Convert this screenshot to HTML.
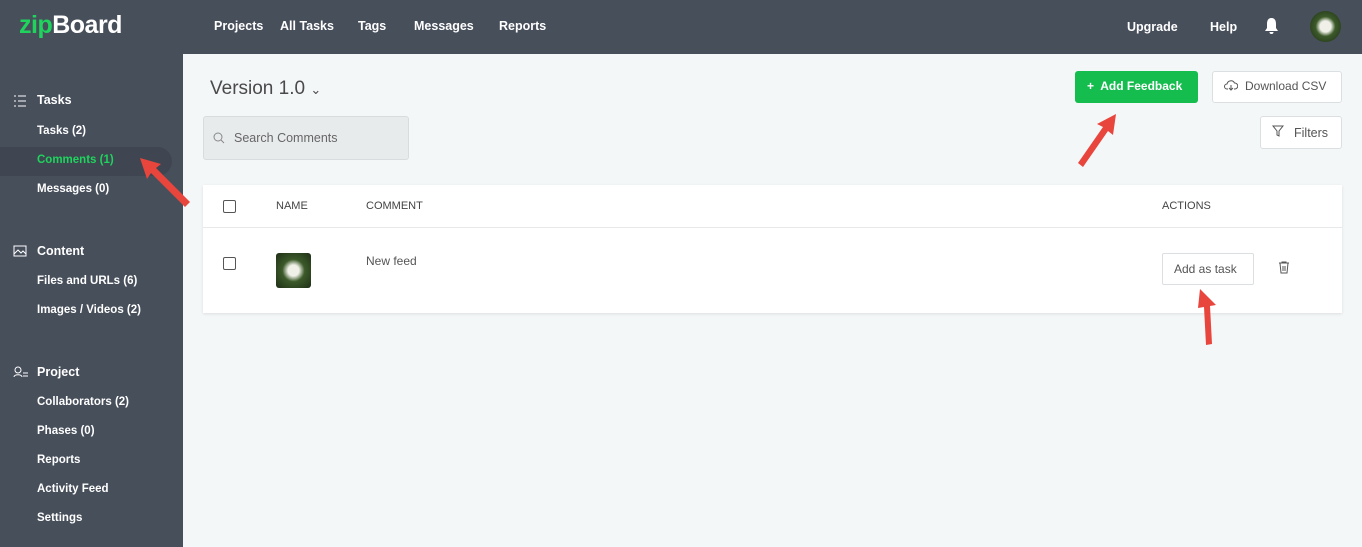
<!DOCTYPE html>
<html><head><style>
*{margin:0;padding:0;box-sizing:border-box}
body{width:1362px;height:547px;overflow:hidden;background:#f4f7f8;font-family:"Liberation Sans",sans-serif;position:relative}
.hdr{position:absolute;left:0;top:0;width:1362px;height:54px;background:#474f5b}
.side{position:absolute;left:0;top:54px;width:183px;height:493px;background:#474f5b}
.t{position:absolute;color:#fff;font-weight:bold;font-size:12.5px;white-space:nowrap}
.s{font-size:11.5px}
.box{position:absolute;background:#fff;border:1px solid #dcdfe2;border-radius:3px}
.g{color:#555;font-size:12.5px;position:absolute;white-space:nowrap}
</style></head><body>
<div class="hdr"></div>
<div class="side"></div>
<div class="t" style="left:19px;top:11px;font-size:25px;letter-spacing:-0.5px"><span style="color:#1fd35d">zip</span>Board</div>
<div class="t" style="left:214px;top:19px">Projects</div>
<div class="t" style="left:280px;top:19px">All Tasks</div>
<div class="t" style="left:358px;top:19px">Tags</div>
<div class="t" style="left:414px;top:19px">Messages</div>
<div class="t" style="left:499px;top:19px">Reports</div>
<div class="t" style="left:1127px;top:20px">Upgrade</div>
<div class="t" style="left:1210px;top:20px">Help</div>
<svg style="position:absolute;left:1263px;top:17px" width="17" height="18"><path d="M8.5 1C5 1 4 4 4 7v4l-2 3h13l-2-3V7c0-3-1-6-4.5-6zM6.5 15a2 2 0 004 0z" fill="#fff"/></svg>
<div style="position:absolute;left:1310px;top:11px;width:31px;height:31px;border-radius:50%;background:radial-gradient(circle,#f0f0e8 0 25%,#3c5a2a 45%,#1e2e16)"></div>

<svg style="position:absolute;left:13px;top:94px" width="14" height="14" stroke="#fff" fill="none"><path d="M1 2h2M1 7h2M1 12h2M5 2h8M5 7h8M5 12h8"/></svg>
<div class="t" style="left:37px;top:93px">Tasks</div>
<div class="t s" style="left:37px;top:125px">Tasks (2)</div>
<div style="position:absolute;left:0;top:147px;width:172px;height:29px;background:#3f4651;border-radius:0 15px 15px 0"></div>
<div class="t s" style="left:37px;top:154px;color:#1fd35d">Comments (1)</div>
<div class="t s" style="left:37px;top:183px">Messages (0)</div>
<svg style="position:absolute;left:13px;top:245px" width="14" height="12" stroke="#fff" fill="none"><rect x="1" y="1" width="12" height="10"/><path d="M1 9l4-4 3 3 2-2 3 3"/></svg>
<div class="t" style="left:37px;top:244px">Content</div>
<div class="t s" style="left:37px;top:275px">Files and URLs (6)</div>
<div class="t s" style="left:37px;top:304px">Images / Videos (2)</div>
<svg style="position:absolute;left:13px;top:366px" width="16" height="12" stroke="#fff" fill="none"><circle cx="5" cy="4" r="3"/><path d="M1 11c0-3 8-3 8 0M10 7h5M10 10h5"/></svg>
<div class="t" style="left:37px;top:365px">Project</div>
<div class="t s" style="left:37px;top:396px">Collaborators (2)</div>
<div class="t s" style="left:37px;top:425px">Phases (0)</div>
<div class="t s" style="left:37px;top:454px">Reports</div>
<div class="t s" style="left:37px;top:483px">Activity Feed</div>
<div class="t s" style="left:37px;top:512px">Settings</div>

<div class="g" style="left:210px;top:78px;font-size:19px;color:#4a4a4a">Version 1.0 <span style="font-size:13px">&#8964;</span></div>
<div style="position:absolute;left:203px;top:116px;width:206px;height:44px;background:#e8ebec;border:1px solid #d8dcdf;border-radius:3px"></div>
<svg style="position:absolute;left:213px;top:132px" width="12" height="12" stroke="#888" fill="none"><circle cx="5" cy="5" r="4"/><path d="M8 8l3 3"/></svg>
<div class="g" style="left:234px;top:131px;color:#666">Search Comments</div>

<div style="position:absolute;left:1075px;top:71px;width:123px;height:32px;background:#15bd4f;border-radius:3px"></div>
<div class="t" style="left:1087px;top:79px;font-size:12px">+&nbsp; Add Feedback</div>
<div class="box" style="left:1212px;top:71px;width:130px;height:32px"></div>
<svg style="position:absolute;left:1224px;top:79px" width="14" height="12" stroke="#555" fill="none"><path d="M4 10H3a2.5 2.5 0 010-5 4 4 0 017.5-1A2.8 2.8 0 0111 10h-1M7 6v5M5 9l2 2 2-2"/></svg>
<div class="g" style="left:1245px;top:79px;font-size:12px">Download CSV</div>
<div class="box" style="left:1260px;top:116px;width:82px;height:33px"></div>
<svg style="position:absolute;left:1272px;top:125px" width="12" height="12" stroke="#555" fill="none"><path d="M1 1h10L7 6v5L5 10V6z"/></svg>
<div class="g" style="left:1294px;top:126px">Filters</div>

<div style="position:absolute;left:203px;top:185px;width:1139px;height:128px;background:#fff;box-shadow:0 1px 3px rgba(0,0,0,.1)"></div>
<div style="position:absolute;left:203px;top:227px;width:1139px;height:1px;background:#e6e8ea"></div>
<div style="position:absolute;left:223px;top:200px;width:13px;height:13px;border:1px solid #555;border-radius:2px"></div>
<div class="g" style="left:276px;top:200px;font-size:11px;color:#444">NAME</div>
<div class="g" style="left:366px;top:200px;font-size:11px;color:#444">COMMENT</div>
<div class="g" style="left:1162px;top:200px;font-size:11px;color:#444">ACTIONS</div>
<div style="position:absolute;left:223px;top:257px;width:13px;height:13px;border:1px solid #555;border-radius:2px"></div>
<div style="position:absolute;left:276px;top:253px;width:35px;height:35px;border-radius:3px;background:radial-gradient(circle,#f0f0e8 0 22%,#3c5a2a 45%,#1e2e16)"></div>
<div class="g" style="left:366px;top:254px;font-size:12px">New feed</div>
<div class="box" style="left:1162px;top:253px;width:92px;height:32px;border-radius:2px"></div>
<div class="g" style="left:1174px;top:262px;font-size:12px">Add as task</div>
<svg style="position:absolute;left:1278px;top:261px" width="12" height="13" stroke="#555" fill="none"><path d="M1 2h10M4 2V1h4v1M2 2l1 10h6l1-10M5 5v5M7 5v5"/></svg>

<svg style="position:absolute;left:0;top:0" width="1362" height="547">
<g fill="#e8453c">
<path d="M140 158l21 6-5 4 34 34-5 5-34-34-4 6z"/>
<path d="M1116 114l-3 21-5-4-25 36-5-4 25-36-6-3z"/>
<path d="M1200 289l16 16-6 1 2 38-6 1-2-38-6 1z"/>
</g></svg>
</body></html>
